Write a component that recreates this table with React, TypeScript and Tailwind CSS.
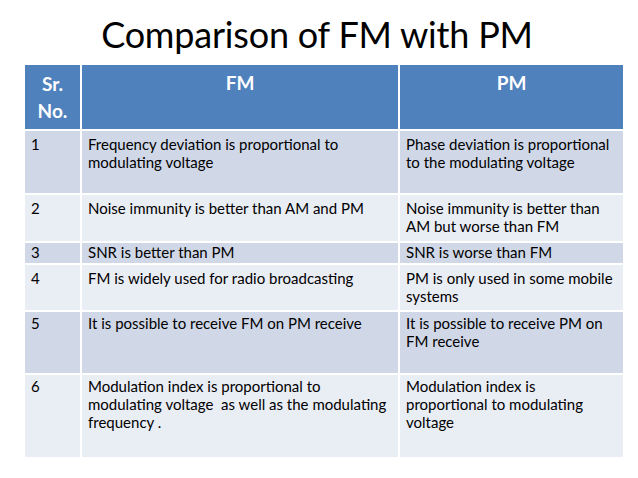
import React from 'react';

const rows = [
  { no: '1', pt: 'pt-[4px]', fm: 'Frequency deviation is proportional to modulating voltage', pm: 'Phase deviation is proportional to the modulating voltage' },
  { no: '2', pt: 'pt-[4px]', fm: 'Noise immunity is better than AM and PM', pm: 'Noise immunity is better than AM but worse than FM' },
  { no: '3', pt: 'pt-[0px]', fm: 'SNR is better than PM', pm: 'SNR is worse than FM' },
  { no: '4', pt: 'pt-[4px]', fm: 'FM is widely used for radio broadcasting', pm: 'PM is only used in some mobile systems' },
  { no: '5', pt: 'pt-[2px]', fm: 'It is possible to receive FM on PM receive', pm: 'It is possible to receive PM on FM receive' },
  { no: '6', pt: 'pt-[2px]', fm: 'Modulation index is proportional to modulating voltage\u00a0 as well as the modulating frequency .', pm: 'Modulation index is proportional to modulating voltage' },
];

export default function App() {
  return (
    <div className="w-[638px] h-[478px] bg-white font-['Lato','Open_Sans',sans-serif] text-black">
      <h1 className="pt-[10px] pr-[4px] h-[65px] text-center text-[36px] leading-[48px] tracking-[-0.2px]">
        Comparison of FM with PM
      </h1>

      <div className="ml-[25px] grid grid-cols-[55px_316px_223px] grid-rows-[64px_62px_46px_20px_45px_61px_82px] gap-[2px]">
        {/* Header */}
        <div className="bg-[#4f81bd] text-white font-bold text-[19px] leading-[27px] text-center pt-[5px]">
          Sr.<br />No.
        </div>
        <div className="bg-[#4f81bd] text-white font-bold text-[19px] leading-[27px] text-center pt-[4px]">FM</div>
        <div className="bg-[#4f81bd] text-white font-bold text-[19px] leading-[27px] text-center pt-[4px]">PM</div>

        {rows.map((r, i) => {
          const bg = i % 2 === 0 ? 'bg-[#d0d8e8]' : 'bg-[#e9edf4]';
          return (
            <React.Fragment key={r.no}>
              <div className={`${bg} ${r.pt} px-[6px] text-[15px] leading-[18px]`}>{r.no}</div>
              <div className={`${bg} ${r.pt} px-[6px] text-[15px] leading-[18px]`}>{r.fm}</div>
              <div className={`${bg} ${r.pt} px-[6px] text-[15px] leading-[18px]`}>{r.pm}</div>
            </React.Fragment>
          );
        })}
      </div>
    </div>
  );
}
